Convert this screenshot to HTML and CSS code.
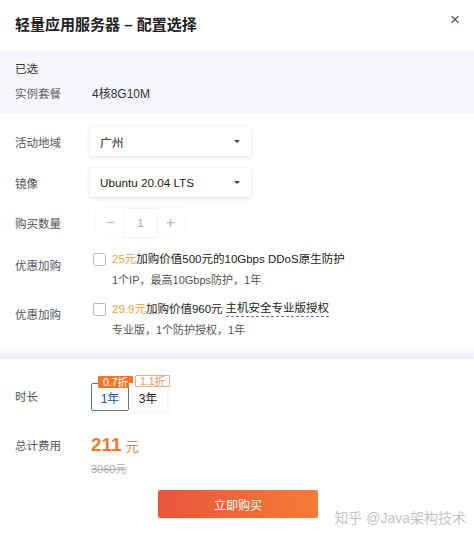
FILE: index.html
```html
<!DOCTYPE html>
<html lang="zh-CN">
<head>
<meta charset="utf-8">
<link rel="stylesheet" href="styles.css">
</head>
<body>
<div class="page">
  <header class="header">
    <h1 class="title">轻量应用服务器 – 配置选择</h1>
    <span class="close">×</span>
  </header>

  <section class="selected">
    <div class="sel-title">已选</div>
    <div class="sel-row"><span class="sel-label">实例套餐</span><span class="sel-value">4核8G10M</span></div>
  </section>

  <section class="form">
    <div class="row row-select">
      <div class="label">活动地域</div>
      <div class="select"><span>广州</span><span class="caret"></span></div>
    </div>
    <div class="row row-select">
      <div class="label">镜像</div>
      <div class="select"><span>Ubuntu 20.04 LTS</span><span class="caret"></span></div>
    </div>
    <div class="row row-select">
      <div class="label">购买数量</div>
      <div class="stepper">
        <span class="step-btn">−</span>
        <span class="step-val">1</span>
        <span class="step-btn">+</span>
      </div>
    </div>
    <div class="row row-addon first">
      <div class="label addon-label">优惠加购</div>
      <div class="addon">
        <div class="addon-line"><span class="checkbox"></span><span class="price-tag">25元</span>加购价值500元的10Gbps DDoS原生防护</div>
        <div class="addon-sub">1个IP，最高10Gbps防护，1年</div>
      </div>
    </div>
    <div class="row row-addon second">
      <div class="label addon-label">优惠加购</div>
      <div class="addon">
        <div class="addon-line"><span class="checkbox"></span><span class="price-tag">29.9元</span>加购价值960元 <span class="dashed">主机安全专业版授权</span></div>
        <div class="addon-sub">专业版，1个防护授权，1年</div>
      </div>
    </div>
  </section>

  <div class="divider"></div>

  <section class="bottom">
    <div class="row row-duration">
      <div class="label">时长</div>
      <div class="options">
        <div class="option active"><span class="badge solid">0.7折</span>1年</div>
        <div class="option"><span class="badge outline">1.1折</span>3年</div>
      </div>
    </div>
    <div class="row row-total">
      <div class="label">总计费用</div>
      <div class="total"><span class="amount">211</span><span class="unit">元</span></div>
    </div>
    <div class="original">3060元</div>
    <div class="actions">
      <button class="buy">立即购买</button>
    </div>
    <div class="watermark">知乎 @Java架构技术</div>
  </section>
</div>
</body>
</html>
```

FILE: styles.css
```css
* { box-sizing: border-box; }
html, body { margin: 0; padding: 0; background: #fff; }
body {
  font-family: "Liberation Sans", "Noto Sans CJK SC", sans-serif;
  font-size: 11.5px;
  color: #333;
  width: 474px;
  height: 539px;
  overflow: hidden;
}
.page { position: relative; height: 539px; }

.header {
  height: 50px;
  display: flex;
  align-items: center;
  justify-content: space-between;
  padding: 0 14px 4px 15px;
}
.title {
  margin: 0;
  font-size: 15px;
  font-weight: bold;
  color: #222;
}
.close {
  font-size: 17px;
  color: #555;
  line-height: 1;
  margin-top: -8px;
}

.selected {
  background: #f4f6f9;
  height: 63px;
  padding: 9px 15px 0;
}
.sel-title { line-height: 20px; color: #333; }
.sel-row { margin-top: 5px; line-height: 20px; display: flex; }
.sel-label { width: 77px; color: #666; }
.sel-value { color: #333; font-size: 12px; }

.form { padding: 14px 0 0 15px; }
.row { display: flex; align-items: center; }
.label { width: 75px; color: #555; flex: none; }
.row-select { height: 29px; margin-bottom: 12px; }
.row-select:nth-child(3) { height: 28px; margin-bottom: 0; }

.select {
  width: 161px;
  height: 29px;
  background: #fff;
  box-shadow: 0 1px 5px rgba(0,0,0,0.12);
  display: flex;
  align-items: center;
  justify-content: space-between;
  padding: 0 11px 0 10px;
  color: #222;
  font-size: 11.7px;
}
.caret {
  width: 0; height: 0;
  border-left: 3px solid transparent;
  border-right: 3px solid transparent;
  border-top: 3px solid #444;
}

.stepper {
  margin-left: 6px;
  display: flex;
  height: 28px;
  box-shadow: 0 0 3px rgba(0,0,0,0.06);
}
.step-btn {
  width: 29px;
  display: flex;
  align-items: center;
  justify-content: center;
  color: #bbb;
  font-size: 16px;
}
.step-val {
  width: 31px;
  display: flex;
  align-items: center;
  justify-content: center;
  color: #aaa;
  box-shadow: 0 0 4px rgba(0,0,0,0.08);
}

.row-addon { align-items: flex-start; }
.row-addon.first { margin-top: 11px; }
.row-addon.second { margin-top: 7px; }
.addon-label { line-height: 22px; margin-top: 7px; }
.row-addon.second .addon-label { margin-top: 6px; }
.addon { margin-left: 3px; }
.addon-line { line-height: 22px; display: flex; align-items: center; color: #222; white-space: nowrap; }
.addon-sub { line-height: 21px; padding-left: 19px; color: #555; font-size: 11px; }
.checkbox {
  width: 13px; height: 13px;
  border: 1px solid #bbb;
  border-radius: 2px;
  margin-right: 6px;
  background: #fff;
}
.price-tag { color: #f0a04a; }
.dashed { border-bottom: 1px dashed #777; line-height: 15px; margin-left: 3px; }

.divider {
  margin-top: 5px;
  height: 13px;
  background: linear-gradient(to bottom, #ffffff, #eceef2);
}

.bottom { padding: 13px 0 0 15px; position: relative; height: 178px; }
.row-duration { height: 39px; align-items: flex-end; }
.row-duration .label { height: 28px; line-height: 28px; }
.options { display: flex; margin-left: 1px; }
.option {
  position: relative;
  width: 38px;
  height: 28px;
  display: flex;
  align-items: center;
  justify-content: center;
  font-size: 12px;
  color: #222;
  background: #fff;
  box-shadow: 2px 1px 4px rgba(0,0,0,0.06);
}
.option.active {
  border: 1px solid #5b7399;
  border-radius: 2px;
  color: #2b5797;
  box-shadow: none;
}
.badge {
  position: absolute;
  top: -8px;
  height: 12px;
  line-height: 12px;
  font-size: 10.5px;
  padding: 0 5px;
  border-radius: 1px;
  white-space: nowrap;
}
.badge.solid { left: 6px; background: #f0782a; color: #fff; }
.badge.outline { left: 6px; border: 1px solid #e9b08a; color: #e39560; background: #fff; line-height: 10px; padding: 0 4px; }

.row-total { margin-top: 22px; height: 24px; }
.total { margin-left: 1px; display: flex; align-items: baseline; color: #ec7a30; }
.amount { font-size: 19px; font-weight: bold; }
.unit { font-size: 13px; margin-left: 4px; }
.original {
  margin-left: 76px;
  margin-top: 3px;
  font-size: 11px;
  color: #aaa;
  text-decoration: line-through;
}

.actions { padding-left: 143px; margin-top: 14px; }
.buy {
  width: 160px;
  height: 28px;
  border: none;
  border-radius: 2px;
  background: linear-gradient(to right, #e9553a, #f77b37);
  color: #fff;
  font-family: inherit;
  font-size: 12px;
  padding: 0;
}
.watermark {
  position: absolute;
  right: 8px;
  bottom: 10px;
  font-size: 14px;
  color: #c4c4c4;
}
```
